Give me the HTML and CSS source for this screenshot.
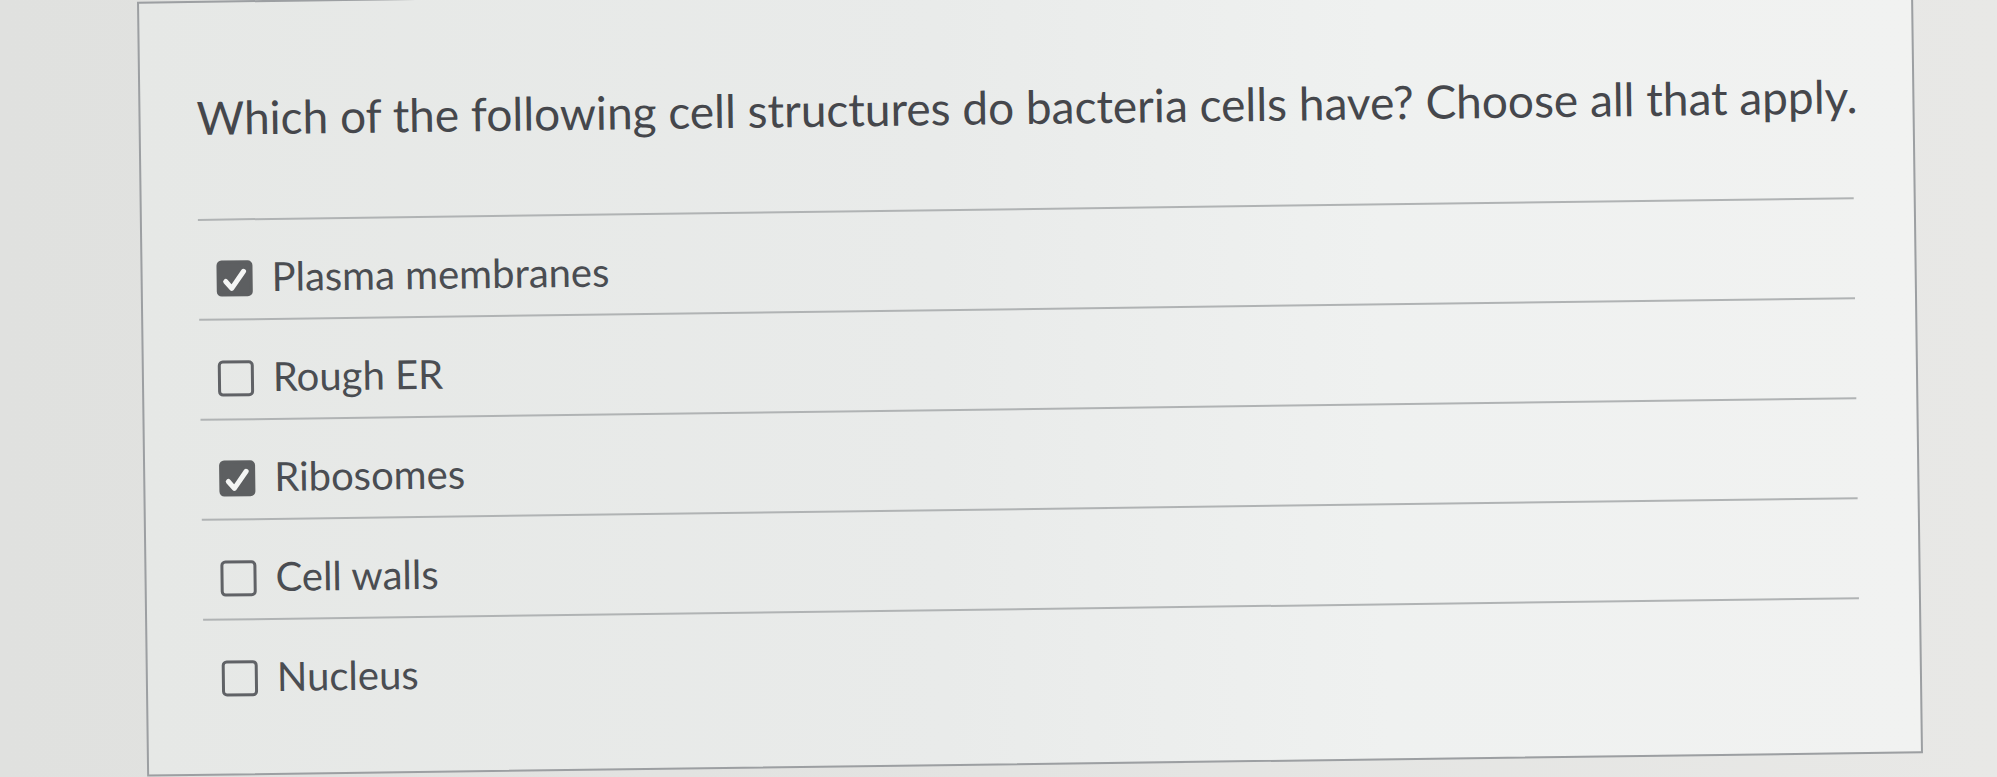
FILE: index.html
```html
<!DOCTYPE html>
<html lang="en">
<head>
<meta charset="utf-8">
<title>Question</title>
<link rel="stylesheet" href="styles.css">
</head>
<body>
<div class="page">
  <div class="card">
    <h1 class="question">Which of the following cell structures do bacteria cells have? Choose all that apply.</h1>
    <ul class="options">
      <li class="option">
        <span class="box checked"><svg viewBox="0 0 36 36" width="36" height="36"><polyline points="9,21 15,28 27,11" /></svg></span>
        <span class="label">Plasma membranes</span>
      </li>
      <li class="option">
        <span class="box"></span>
        <span class="label">Rough ER</span>
      </li>
      <li class="option">
        <span class="box checked"><svg viewBox="0 0 36 36" width="36" height="36"><polyline points="9,21 15,28 27,11" /></svg></span>
        <span class="label">Ribosomes</span>
      </li>
      <li class="option">
        <span class="box"></span>
        <span class="label">Cell walls</span>
      </li>
      <li class="option">
        <span class="box"></span>
        <span class="label">Nucleus</span>
      </li>
    </ul>
  </div>
</div>
</body>
</html>
```
FILE: styles.css
```css
html, body {
  margin: 0;
  padding: 0;
  height: 100%;
  overflow: hidden;
}
body {
  background: linear-gradient(90deg, #e0e1df 0%, #e3e4e2 50%, #e8e8e6 100%);
  font-family: Lato, "Open Sans", "Liberation Sans", sans-serif;
  color: #4a4c51;
}
.page {
  padding-left: 142px;
  padding-top: 0;
}
.card {
  box-sizing: border-box;
  width: 1776px;
  height: 775px;
  margin-top: -10px;
  border: 2px solid #9c9fa2;
  background: linear-gradient(90deg, #e6e8e6 0%, #e9ebea 45%, #eff1f0 70%, #f1f2f1 100%);
  padding: 88px 60px 0 56px;
  transform: rotate(-0.75deg);
}
.question {
  margin: 0 0 74px 0;
  font-size: 46px;
  line-height: 54px;
  font-weight: 400;
  color: #45474c;
  white-space: nowrap;
}
.options {
  list-style: none;
  margin: 0;
  padding: 0;
}
.option {
  display: flex;
  align-items: center;
  gap: 19px;
  border-top: 2px solid #b0b3b4;
  padding: 40px 0 22px 18px;
  height: 36px;
}
.box {
  box-sizing: border-box;
  flex: none;
  width: 36px;
  height: 36px;
  border: 3px solid #606266;
  border-radius: 5px;
  display: flex;
}
.box.checked {
  background: #5d5f61;
  border-color: #5d5f61;
}
.box svg {
  margin: -3px;
}
.box polyline {
  fill: none;
  stroke: #f4f5f4;
  stroke-width: 5;
  stroke-linecap: round;
  stroke-linejoin: round;
}
.label {
  font-size: 40px;
  line-height: 40px;
  position: relative;
  top: -2px;
  color: #4a4d52;
}
```
